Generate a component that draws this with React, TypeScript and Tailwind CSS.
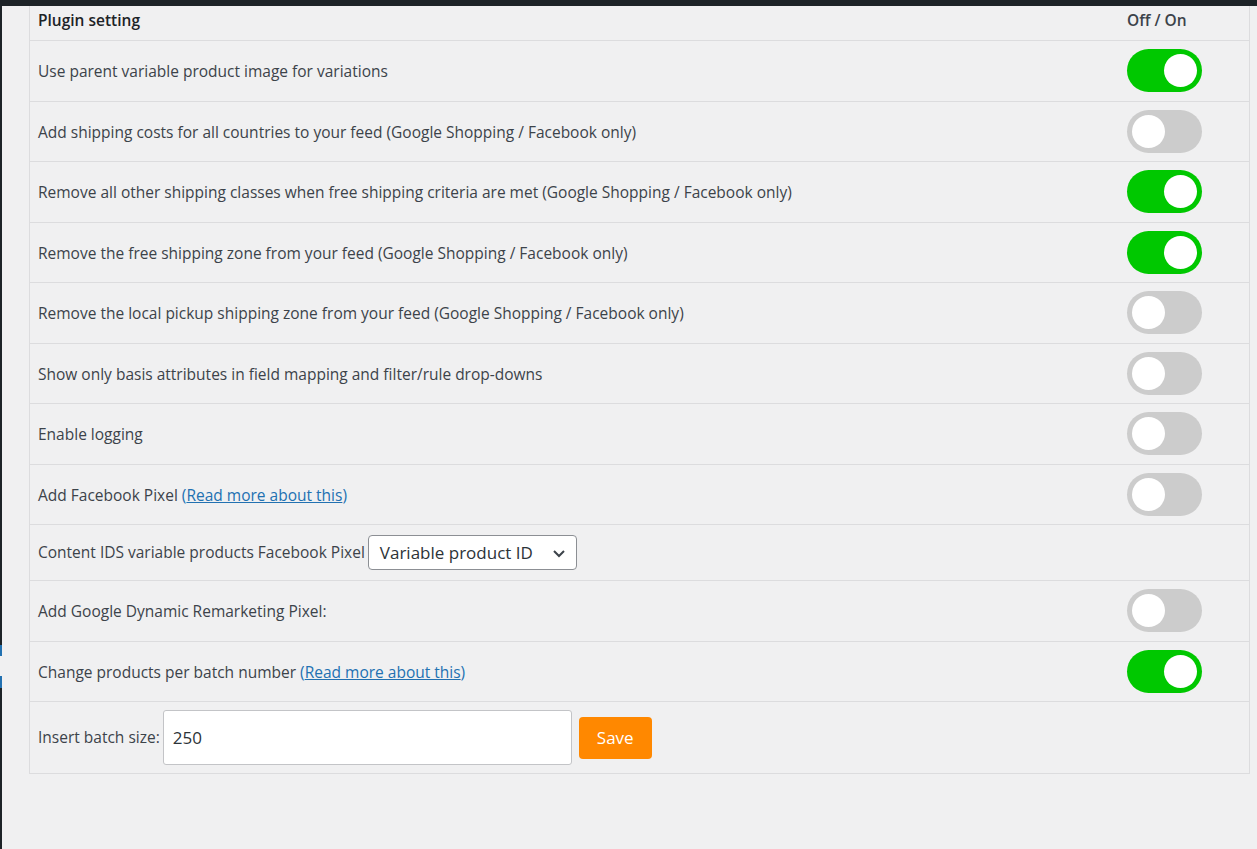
import { useState } from 'react';

type Row =
  | { kind: 'toggle'; label: string; on: boolean; link?: boolean }
  | { kind: 'select'; label: string }
  | { kind: 'batch'; label: string };

const rows: Row[] = [
  { kind: 'toggle', label: 'Use parent variable product image for variations', on: true },
  { kind: 'toggle', label: 'Add shipping costs for all countries to your feed (Google Shopping / Facebook only)', on: false },
  { kind: 'toggle', label: 'Remove all other shipping classes when free shipping criteria are met (Google Shopping / Facebook only)', on: true },
  { kind: 'toggle', label: 'Remove the free shipping zone from your feed (Google Shopping / Facebook only)', on: true },
  { kind: 'toggle', label: 'Remove the local pickup shipping zone from your feed (Google Shopping / Facebook only)', on: false },
  { kind: 'toggle', label: 'Show only basis attributes in field mapping and filter/rule drop-downs', on: false },
  { kind: 'toggle', label: 'Enable logging', on: false },
  { kind: 'toggle', label: 'Add Facebook Pixel', on: false, link: true },
  { kind: 'select', label: 'Content IDS variable products Facebook Pixel' },
  { kind: 'toggle', label: 'Add Google Dynamic Remarketing Pixel:', on: false },
  { kind: 'toggle', label: 'Change products per batch number', on: true, link: true },
  { kind: 'batch', label: 'Insert batch size:' },
];

const Toggle = ({ on, onClick }: { on: boolean; onClick: () => void }) => (
  <button
    onClick={onClick}
    className={`relative w-[75px] h-[43px] rounded-full ${on ? 'bg-[#00c800]' : 'bg-[#cccccc]'}`}
  >
    <span
      className={`absolute top-[5px] w-[33px] h-[33px] rounded-full bg-white ${on ? 'left-[37px]' : 'left-[5px]'}`}
    />
  </button>
);

const ReadMore = () => (
  <>
    {' '}
    <span className="text-[#2271b1]">
      (<a href="#" className="underline">Read more about this</a>)
    </span>
  </>
);

export default function App() {
  const [state, setState] = useState<boolean[]>(rows.map((r) => (r.kind === 'toggle' ? r.on : false)));
  const [batch, setBatch] = useState('250');

  return (
    <div
      className="min-h-[849px] bg-[#f0f0f1] text-[#3c434a] text-[15.5px]"
      style={{ fontFamily: '"Open Sans", "Noto Sans", sans-serif' }}
    >
      <div className="h-[6px] bg-[#1d2327]" />
      <div className="flex">
        <div className="w-[2px] shrink-0 flex flex-col bg-[#1d2327] min-h-[843px]">
          <div className="h-[639px]" />
          <div className="h-[11px] bg-[#2271b1]" />
          <div className="h-[20px] bg-[#f0f0f1]" />
          <div className="h-[12px] bg-[#2271b1]" />
        </div>
        <div className="pl-[27px] pr-[7px] flex-1">
          <div className="border-x border-b border-[#dcdcde]">
            {/* header */}
            <div className="flex items-start pt-[3px] h-[35px] border-b border-[#dcdcde] font-semibold text-[#1d2327]">
              <div className="flex-1 px-[8px]">Plugin setting</div>
              <div className="w-[131px] px-[9px] text-[#3c434a]">Off / On</div>
            </div>
            {rows.map((r, i) => {
              if (r.kind === 'select') {
                return (
                  <div key={i} className="flex items-center h-[56px] border-b border-[#dcdcde] px-[8px]">
                    <span>{r.label}</span>
                    <div className="ml-[3px] flex items-center justify-between w-[209px] h-[35px] bg-white border border-[#8c8f94] rounded-[4px] pl-[11px] pr-[9px] text-[17px] text-[#2c3338]">
                      <span>Variable product ID</span>
                      <svg width="16" height="16" viewBox="0 0 16 16" fill="none">
                        <path d="M3 6l5 5 5-5" stroke="#3c434a" strokeWidth="2" />
                      </svg>
                    </div>
                  </div>
                );
              }
              if (r.kind === 'batch') {
                return (
                  <div key={i} className="flex items-center h-[71px] px-[8px]">
                    <span>{r.label}</span>
                    <input
                      value={batch}
                      onChange={(e) => setBatch(e.target.value)}
                      className="ml-[3px] w-[409px] h-[55px] bg-white border border-[#c3c4c7] rounded-[3px] px-[9px] text-[17px] text-[#2c3338] outline-none"
                    />
                    <button className="ml-[7px] w-[73px] h-[42px] bg-[#ff8800] rounded-[4px] text-white text-[17px]">
                      Save
                    </button>
                  </div>
                );
              }
              return (
                <div key={i} className="flex items-center h-[60.5px] border-b border-[#dcdcde]">
                  <div className="flex-1 px-[8px] pt-[2px]">
                    {r.label}
                    {r.link && <ReadMore />}
                  </div>
                  <div className="w-[131px] px-[9px] flex">
                    <Toggle
                      on={state[i]}
                      onClick={() => setState((s) => s.map((v, j) => (j === i ? !v : v)))}
                    />
                  </div>
                </div>
              );
            })}
          </div>
        </div>
      </div>
    </div>
  );
}
